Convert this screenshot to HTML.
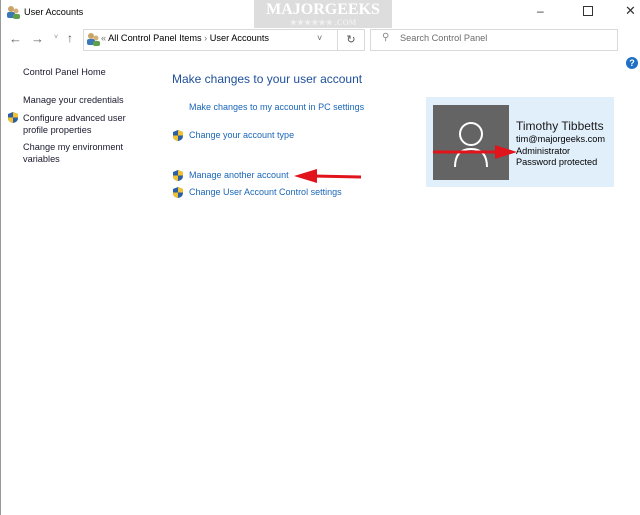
<!DOCTYPE html>
<html><head><style>
body{margin:0;width:640px;height:515px;background:#fff;font-family:"Liberation Sans",sans-serif;position:relative;overflow:hidden;border-left:1px solid #999;box-sizing:border-box}
.a{position:absolute;white-space:nowrap}
.t{font-size:9.2px;color:#1a1a2e}
.l{font-size:9px;color:#1a66b8}
.sh{position:absolute;width:10px;height:11px}
</style></head><body>
<svg class="a" style="left:5px;top:5px" width="14" height="14"><circle cx="5" cy="4" r="3" fill="#c9a46a"/><rect x="1" y="7" width="8" height="6" rx="2" fill="#3a78b8"/><circle cx="10" cy="6" r="2.5" fill="#d4b07a"/><rect x="7" y="9" width="7" height="5" rx="2" fill="#5fa04a"/></svg>
<div class="a" style="left:23px;top:7px;font-size:9.2px;color:#000">User Accounts</div>
<div class="a" style="left:253px;top:0;width:138px;height:28px;background:#d8d8d8;opacity:.85;color:#fff;font:bold 16px 'Liberation Serif',serif;text-align:center;line-height:20px">MAJORGEEKS<div style="font-size:8px;line-height:6px;color:#eee">★★★★★★ .COM</div></div>
<div class="a" style="left:536px;top:4px;font-size:12px;color:#333">–</div>
<div class="a" style="left:582px;top:6px;width:8px;height:8px;border:1px solid #333"></div>
<div class="a" style="left:624px;top:3px;font-size:13px;color:#333">✕</div>
<div class="a" style="left:8px;top:31px;font-size:13px;color:#666">←</div>
<div class="a" style="left:30px;top:31px;font-size:13px;color:#666">→</div>
<div class="a" style="left:53px;top:34px;font-size:7px;color:#888">˅</div>
<div class="a" style="left:66px;top:31px;font-size:12px;color:#555">↑</div>
<div class="a" style="left:82px;top:29px;width:253px;height:20px;border:1px solid #d9d9d9"></div>
<svg class="a" style="left:85px;top:32px" width="14" height="14"><circle cx="5" cy="4" r="3" fill="#c9a46a"/><rect x="1" y="7" width="8" height="6" rx="2" fill="#3a78b8"/><circle cx="10" cy="6" r="2.5" fill="#d4b07a"/><rect x="7" y="9" width="7" height="5" rx="2" fill="#5fa04a"/></svg>
<div class="a" style="left:100px;top:33px;font-size:9.2px;color:#000"><span style="color:#777">«</span> All Control Panel Items <span style="color:#777">›</span> User Accounts</div>
<div class="a" style="left:316px;top:33px;font-size:9px;color:#666">˅</div>
<div class="a" style="left:336px;top:29px;width:26px;height:20px;border:1px solid #d9d9d9;text-align:center;font-size:11px;line-height:20px;color:#555">↻</div>
<div class="a" style="left:369px;top:29px;width:246px;height:20px;border:1px solid #d9d9d9"></div>
<div class="a" style="left:381px;top:32px;font-size:10px;color:#888">⚲</div>
<div class="a" style="left:399px;top:33px;font-size:9.2px;color:#6d6d6d">Search Control Panel</div>
<div class="a" style="left:625px;top:57px;width:12px;height:12px;border-radius:50%;background:#1f6fc5;color:#fff;font-size:9px;font-weight:bold;text-align:center;line-height:12px">?</div>
<div class="a t" style="left:22px;top:67px">Control Panel Home</div>
<div class="a t" style="left:22px;top:95px">Manage your credentials</div>
<div class="a t" style="left:22px;top:112px;line-height:12px">Configure advanced user<br>profile properties</div>
<div class="a t" style="left:22px;top:141px;line-height:12px">Change my environment<br>variables</div>
<div class="a" style="left:171px;top:72px;font-size:12px;color:#1e4f9a">Make changes to your user account</div>
<div class="a l" style="left:188px;top:102px">Make changes to my account in PC settings</div>
<div class="a l" style="left:188px;top:130px">Change your account type</div>
<div class="a l" style="left:188px;top:170px">Manage another account</div>
<div class="a l" style="left:188px;top:187px">Change User Account Control settings</div>
<svg width="0" height="0" style="position:absolute"><defs><g id="s"><path d="M5 0 L10 2 L10 6 Q10 10 5 11 Q0 10 0 6 L0 2 Z" fill="#2a5fa8"/><path d="M5 0 L10 2 L10 5.5 L5 5.5 Z" fill="#f2c230"/><path d="M0 5.5 L5 5.5 L5 11 Q0 10 0 6 Z" fill="#f2c230"/></g></defs></svg>
<svg class="sh" style="left:7px;top:112px"><use href="#s"/></svg>
<svg class="sh" style="left:172px;top:130px"><use href="#s"/></svg>
<svg class="sh" style="left:172px;top:170px"><use href="#s"/></svg>
<svg class="sh" style="left:172px;top:187px"><use href="#s"/></svg>
<div class="a" style="left:425px;top:97px;width:188px;height:90px;background:#e1effb"></div>
<div class="a" style="left:432px;top:105px;width:76px;height:75px;background:#646464"></div>
<svg class="a" style="left:432px;top:105px" width="76" height="75"><circle cx="38" cy="29" r="11" fill="none" stroke="#fff" stroke-width="2"/><path d="M22 62 Q22 44 38 44 Q54 44 54 62" fill="none" stroke="#fff" stroke-width="2"/></svg>
<div class="a" style="left:515px;top:119px;font-size:12px;color:#1a1a1a">Timothy Tibbetts</div>
<div class="a" style="left:515px;top:134px;font-size:9.2px;color:#000;line-height:11.5px">tim@majorgeeks.com<br>Administrator<br>Password protected</div>
<svg class="a" style="left:0;top:0" width="640" height="515"><path d="M432 152 L498 152" stroke="#e0141a" stroke-width="3"/><path d="M494 145 L516 152 L494 159 Z" fill="#e0141a"/><path d="M360 177 L312 176" stroke="#e0141a" stroke-width="3"/><path d="M316 169 L293 176 L316 183 Z" fill="#e0141a"/></svg>
</body></html>
